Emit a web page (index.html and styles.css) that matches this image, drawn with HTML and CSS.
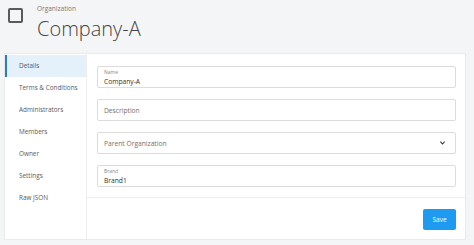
FILE: index.html
```html
<!DOCTYPE html>
<html>
<head>
<meta charset="utf-8">
<link rel="stylesheet" href="styles.css">
</head>
<body>
<header class="page-header">
  <div class="entity-icon"></div>
  <div class="title-block">
    <div class="kicker">Organization</div>
    <h1 class="title">Company-A</h1>
  </div>
</header>
<section class="card">
  <nav class="sidenav">
    <div class="nav-item active">Details</div>
    <div class="nav-item">Terms &amp; Conditions</div>
    <div class="nav-item">Administrators</div>
    <div class="nav-item">Members</div>
    <div class="nav-item">Owner</div>
    <div class="nav-item">Settings</div>
    <div class="nav-item">Raw JSON</div>
  </nav>
  <div class="main">
    <div class="form">
      <div class="field filled">
        <div class="field-label">Name</div>
        <div class="field-value">Company-A</div>
      </div>
      <div class="field empty">Description</div>
      <div class="field empty select">
        <span>Parent Organization</span>
        <svg class="chevron" width="5" height="4" viewBox="0 0 5 4"><path d="M0.4 0.6 L2.5 3 L4.6 0.6" fill="none" stroke="#333" stroke-width="1.1"/></svg>
      </div>
      <div class="field filled">
        <div class="field-label">Brand</div>
        <div class="field-value">Brand1</div>
      </div>
    </div>
    <div class="footer">
      <button class="btn-save">Save</button>
    </div>
  </div>
</section>
</body>
</html>
```

FILE: styles.css
```css
* { box-sizing: border-box; }
html, body { margin: 0; padding: 0; }
body {
  background: #f4f5f7;
  font-family: "Open Sans", "Noto Sans", sans-serif;
  width: 474px;
  height: 245px;
  overflow: hidden;
}
.page-header {
  display: flex;
  align-items: flex-start;
  height: 53px;
}
.entity-icon {
  width: 15px;
  height: 15px;
  margin: 8px 0 0 8px;
  border: 2px solid #5a5a5a;
  border-radius: 2px;
}
.title-block {
  margin-left: 14px;
  padding-top: 4px;
}
.kicker {
  font-size: 6.5px;
  line-height: 9px;
  color: #777;
}
.title {
  margin: 4px 0 0;
  font-size: 20px;
  line-height: 24px;
  font-weight: 300;
  color: #444;
}
.card {
  display: flex;
  margin: 0 8px 0 4px;
  height: 187px;
  background: #fff;
  border: 1px solid #e9eaec;
}
.sidenav {
  width: 82px;
  padding-top: 1px;
  border-right: 1px solid #eeeeee;
  flex: none;
}
.nav-item {
  height: 22px;
  line-height: 22px;
  padding-left: 12px;
  font-size: 6.4px;
  color: #5a5a5a;
  border-left: 2px solid transparent;
}
.nav-item.active {
  background: #e4f1fb;
  border-left-color: #2a7cc0;
}
.main {
  flex: 1;
  display: flex;
  flex-direction: column;
}
.form {
  display: flex;
  flex-direction: column;
  gap: 11px;
  padding: 12px 9px 10px 10px;
  border-bottom: 1px solid #eeeeee;
}
.field {
  height: 22px;
  border: 1px solid #dcdcdc;
  border-radius: 2px;
  padding: 2px 6px 1px;
}
.field-label {
  font-size: 5px;
  line-height: 7px;
  color: #888;
}
.field-value {
  font-size: 6.7px;
  line-height: 11px;
  color: #333;
}
.field.empty {
  display: flex;
  align-items: center;
  padding: 0 6px;
  font-size: 6.7px;
  color: #707070;
}
.field.select {
  justify-content: space-between;
}
.chevron { margin-right: 4px; }
.footer {
  flex: 1;
  display: flex;
  justify-content: flex-end;
  align-items: flex-start;
  padding: 11px 9px 0 0;
}
.btn-save {
  width: 33px;
  height: 21px;
  border: none;
  border-radius: 2px;
  background: #1e9bf0;
  color: #fff;
  font-family: "Open Sans", "Noto Sans", sans-serif;
  font-size: 6.5px;
  padding: 0;
}
```
